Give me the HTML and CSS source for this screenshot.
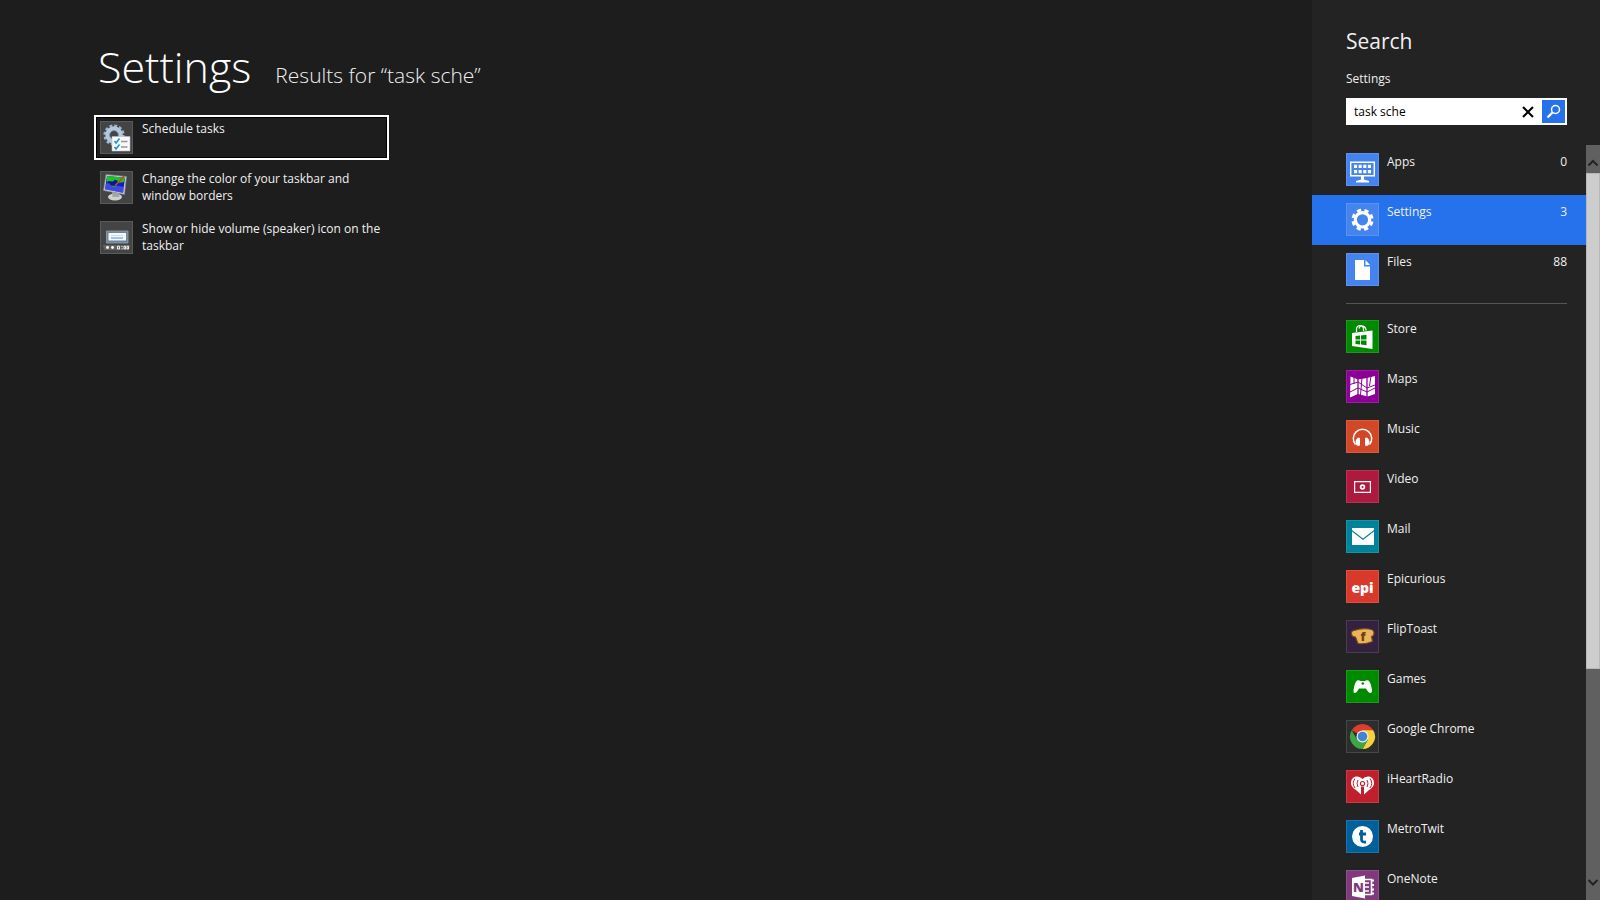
FILE: index.html
```html
<!DOCTYPE html>
<html lang="en">
<head>
    <meta charset="utf-8">
    <title>Search - Settings</title>
    <link rel="stylesheet" href="styles.css">
</head>
<body>
    <!-- RESULTS -->
    <main class="results">
        <header class="results-header">
            <h1>Settings</h1>
            <p>Results for “task sche”</p>
        </header>
        <ul class="tiles">
            <li><button type="button" class="tile focused">
                <svg class="icon gray" viewBox="0 0 33 33">
                    <circle cx="14" cy="14" r="9.3" fill="none" stroke="#9db4cc" stroke-width="2.6" stroke-dasharray="2.9 1.97"/>
                    <circle cx="14" cy="14" r="6.5" fill="none" stroke="#b4c8dc" stroke-width="4.4"/>
                    <circle cx="14" cy="14" r="4.4" fill="none" stroke="#7890a8"/>
                    <path d="M12 15.500h18v14.500h-18z" fill="#f8fafc" stroke="#b4bcc4" stroke-width=".6"/>
                    <path d="M14.500 20l1.500 2 3.500-4.500M14.500 26l1.500 2 3.500-4.500" fill="none" stroke="#1695c8" stroke-width="1.500"/>
                    <path d="M21 20.500h6.500M21 26h6.500" stroke="#9a90a8" stroke-width="1.300"/>
                </svg>
                <span>Schedule tasks</span>
            </button></li>
            <li><button type="button" class="tile">
                <svg class="icon gray" viewBox="0 0 33 33">
                    <ellipse cx="15" cy="26" rx="7" ry="3.500" fill="#d0d2d0"/>
                    <path d="M12 21l7 1 .5 4h-7z" fill="#a4a8a4"/>
                    <path d="M6 3.500L26.500 5.500 24.500 23.500 3.500 19.500z" fill="#c4c8c8" stroke="#83888a" stroke-width=".6"/>
                    <path d="M7 5L25 6.800 23 21.800 5 18.300z" fill="#1818c8"/>
                    <path d="M5 18.300L5.900 12.500 23.800 16 23 21.800z" fill="#5a6cf0" opacity=".6"/>
                    <path d="M7 5L25 6.800 24 11l-6 1-3 4-4-1 2-3-6 .5z" fill="#16c81e"/>
                    <path d="M8 10l5 .5 2-2 3 1.500-3 5-4-.5-1-2-3-.500z" fill="#0a1494"/>
                    <path d="M24 5l-5 6-4 3" fill="none" stroke="#e03428" stroke-width="1.300"/>
                </svg>
                <span>Change the color of your taskbar and window borders</span>
            </button></li>
            <li><button type="button" class="tile">
                <svg class="icon gray" viewBox="0 0 33 33">
                    <path d="M6.500 10h21.500v12h-21.500z" fill="#6f8496" stroke="#8fa4b4" stroke-width=".8"/>
                    <path d="M8.500 12h17.500v7.500h-17.500z" fill="#f4f8fc"/>
                    <path d="M11 17h12" stroke="#4a90d0"/>
                    <path d="M11 14.500h12" stroke="#cfdbe6"/>
                    <path d="M3 24h27l-1 5H4z" fill="#626262"/>
                    <circle cx="7.500" cy="26.500" r="1.400" fill="#fff"/>
                    <circle cx="12.500" cy="26.500" r="1.400" fill="#fff"/>
                    <path d="M17.500 25.200h2v2.800h-2zM24 25.200h1.500v2.800h-1.500zM27 25.200h1.500v2.800h-1.500z" fill="none" stroke="#fff" stroke-width=".9"/>
                    <path d="M22 25v1M22 27.300v1" stroke="#fff"/>
                </svg>
                <span>Show or hide volume (speaker) icon on the taskbar</span>
            </button></li>
        </ul>
    </main>

    <!-- SEARCH CHARM -->
    <aside class="charm">
        <form class="search">
            <h2>Search</h2>
            <label for="query">Settings</label>
            <div class="search-box">
                <input type="text" id="query" value="task sche">
                <button type="reset" class="clear" aria-label="Clear">
                    <svg viewBox="0 0 12 12"><path d="M1 1l10 10M11 1L1 11" fill="none" stroke="#000" stroke-width="2"/></svg>
                </button>
                <button type="submit" class="go" aria-label="Search">
                    <svg viewBox="0 0 23 23"><circle cx="13.500" cy="9.500" r="4" fill="none" stroke="#fff" stroke-width="1.500"/><path d="M10.500 12.500L5.500 17.500" stroke="#fff" stroke-width="2.300"/></svg>
                </button>
            </div>
        </form>

        <div class="scroller">
            <nav class="list">
                <ul>
                    <li><button type="button" class="entry">
                        <svg class="icon blue" viewBox="0 0 33 33">
                            <path d="M4.700 9.300h23.600v13.400h-23.600z" fill="none" stroke="#fff" stroke-width="1.400"/>
                            <path d="M8 13.400h17M8 18.600h17" fill="none" stroke="#fff" stroke-width="3.400" stroke-dasharray="3.100 1.530"/>
                            <path d="M15 23h3v3.500l5 1.500v1.500H10V28l5-1.500z" fill="#fff"/>
                        </svg>
                        <span>Apps</span><span class="count">0</span>
                    </button></li>
                    <li><button type="button" class="entry selected">
                        <svg class="icon blue" viewBox="0 0 33 33">
                            <circle cx="16.500" cy="16.800" r="7.200" fill="none" stroke="#fff" stroke-width="3.200"/>
                            <circle cx="16.500" cy="16.800" r="9.700" fill="none" stroke="#fff" stroke-width="2.800" stroke-dasharray="4.200 3.418" stroke-dashoffset="-1.700"/>
                        </svg>
                        <span>Settings</span><span class="count">3</span>
                    </button></li>
                    <li><button type="button" class="entry">
                        <svg class="icon blue" viewBox="0 0 33 33">
                            <path d="M9 7h9v6.500h6V27H9zM19.500 7L24 12h-4.500z" fill="#fff"/>
                        </svg>
                        <span>Files</span><span class="count">88</span>
                    </button></li>
                </ul>
                <hr>
                <ul>
                    <li><button type="button" class="entry">
                        <svg class="icon green" viewBox="0 0 33 33">
                            <path d="M6 13l20.500-2.500V29L6 26z" fill="#fff"/>
                            <path d="M10.500 12V8.500Q11 5.500 14 5.500T17.500 8.500V11M13 8.500Q14 5 17 6t3 4.500" fill="none" stroke="#fff" stroke-width="1.200"/>
                            <path d="M9.500 16l4.500-.5v4H9.500zM15 15.400l5.500-.6v4.700H15zM9.500 20.500H14v4l-4.500-.5zM15 20.500h5.500v4.800L15 24.600z" fill="#008a00"/>
                        </svg>
                        <span>Store</span>
                    </button></li>
                    <li><button type="button" class="entry">
                        <svg class="icon purple" viewBox="0 0 33 33">
                            <path d="M4.500 6.500l7.500 3 9-1.500 8-2V24l-7.500 2.500L12 24l-8 3.500z" fill="#fff"/>
                            <path d="M12 9v16M21 7v20" fill="none" stroke="#8c0095" stroke-width="1.300"/>
                            <path d="M4 14.500l8-2.500 9 6 8-3M4 22l8-4 9 4 8-4M8 7v7M16 8l-1.500 17M25 6l-1.500 10" fill="none" stroke="#8c0095"/>
                        </svg>
                        <span>Maps</span>
                    </button></li>
                    <li><button type="button" class="entry">
                        <svg class="icon orange" viewBox="0 0 33 33">
                            <path d="M9.500 24.500A9.200 9.200 0 1 1 23.500 24.500" fill="none" stroke="#fff" stroke-width="1.500"/>
                            <path d="M12 17.500l2 .5v7.500l-2 .5q-2.500-1-2.500-4T12 17.500zM21 17.500l-2 .5v7.500l2 .5q2.500-1 2.500-4T21 17.500z" fill="#fff"/>
                        </svg>
                        <span>Music</span>
                    </button></li>
                    <li><button type="button" class="entry">
                        <svg class="icon crimson" viewBox="0 0 33 33">
                            <path d="M8.600 11.600h15.800v10.800H8.600z" fill="none" stroke="#fff" stroke-width="1.200"/>
                            <circle cx="16.500" cy="17" r="1.900" fill="none" stroke="#fff" stroke-width="1.700"/>
                        </svg>
                        <span>Video</span>
                    </button></li>
                    <li><button type="button" class="entry">
                        <svg class="icon teal" viewBox="0 0 33 33">
                            <path d="M6 8h22v2L17 18.500 6 10zM6 11.500L17 20l11-8.500V25H6z" fill="#fff"/>
                        </svg>
                        <span>Mail</span>
                    </button></li>
                    <li><button type="button" class="entry">
                        <svg class="icon red" viewBox="0 0 33 33">
                            <text x="16.500" y="23" class="epi">epi</text>
                        </svg>
                        <span>Epicurious</span>
                    </button></li>
                    <li><button type="button" class="entry">
                        <svg class="icon plum" viewBox="0 0 33 33">
                            <path d="M8 10.500Q15 8 23 9q5 .5 5 4 0 3-2.500 3.500L26.500 21.500Q19 24.500 12 23.500L9.500 17Q6 17 5.500 14T8 10.500z" fill="#e8b45c" stroke="#7c4a18" stroke-width="1.200"/>
                            <text x="17" y="20.500" class="toast">f</text>
                        </svg>
                        <span>FlipToast</span>
                    </button></li>
                    <li><button type="button" class="entry">
                        <svg class="icon green" viewBox="0 0 33 33">
                            <path d="M11 10.500q2-.8 3.500.5h4.500q1.500-1.300 3.500-.500 2.500 2 3.500 10 0 2.500-1.700 2.500T20 18.500h-7Q10.500 23 8.800 23T7.500 20.500q1-8 3.500-10z" fill="#fff"/>
                            <circle cx="16.800" cy="13.500" r="1.300" fill="#008a00"/>
                        </svg>
                        <span>Games</span>
                    </button></li>
                    <li><button type="button" class="entry">
                        <svg class="icon dark" viewBox="0 0 33 33">
                            <path d="M16.500 16.500L5.700 10.200A12.500 12.500 0 0 1 27.300 10.200z" fill="#dc3d2e"/>
                            <path d="M16.500 16.500V10.200H27.300A12.500 12.500 0 0 1 16.500 29L22 19.600z" fill="#f8d03c"/>
                            <path d="M16.500 16.500L22 19.600 16.500 29A12.500 12.500 0 0 1 5.700 10.200L11 19.600z" fill="#3fa648"/>
                            <circle cx="16.500" cy="16.500" r="6" fill="#eef0f0"/>
                            <circle cx="16.500" cy="16.500" r="4.800" fill="#3f86d0"/>
                        </svg>
                        <span>Google Chrome</span>
                    </button></li>
                    <li><button type="button" class="entry">
                        <svg class="icon scarlet" viewBox="0 0 33 33">
                            <path d="M16.500 9Q19 6 23 6.500q5 1 5 6.500 0 4-5 7l-5 4.500v-8h-3v8L10 20q-5-3-5-7 0-5.500 5-6.500 4-.5 6.500 2.500z" fill="#fff"/>
                            <circle cx="16.500" cy="13.500" r="2.600" fill="#c0202c"/>
                            <circle cx="16.500" cy="13.500" r="1.500" fill="#fff"/>
                            <path d="M12 10q-2 3.500 0 7M9 8.500q-3.500 5 0 9.500M21 10q2 3.500 0 7M24 8.500q3.500 5 0 9.500" fill="none" stroke="#c0202c"/>
                        </svg>
                        <span>iHeartRadio</span>
                    </button></li>
                    <li><button type="button" class="entry">
                        <svg class="icon azure" viewBox="0 0 33 33">
                            <circle cx="16.500" cy="16.500" r="10.500" fill="#fff"/>
                            <path d="M15.500 10v9.500q0 3 4.500 2.500M13 14h7" fill="none" stroke="#00609c" stroke-width="2.800"/>
                        </svg>
                        <span>MetroTwit</span>
                    </button></li>
                    <li><button type="button" class="entry">
                        <svg class="icon violet" viewBox="0 0 33 33">
                            <path d="M6 8l13-2.500v23L6 26z" fill="#fff"/>
                            <path d="M19 9.500h6.500v15H19M19 13h4M19 17h4M19 21h4" fill="none" stroke="#fff" stroke-width="1.600"/>
                            <path d="M25 10.500h3M25 15h3M25 19.500h3M25 23.500h3" stroke="#fff" stroke-width="2.200"/>
                            <text x="12.500" y="21.500" class="note">N</text>
                        </svg>
                        <span>OneNote</span>
                    </button></li>
                </ul>
            </nav>
            <div class="scrollbar">
                <button type="button" aria-label="Scroll up"><svg viewBox="0 0 14 28"><path d="M2.500 20.500L7 16l4.500 4.500" fill="none" stroke="#222" stroke-width="2"/></svg></button>
                <div class="track"><div class="thumb"></div></div>
                <button type="button" aria-label="Scroll down"><svg viewBox="0 0 14 28"><path d="M2.500 8L7 12.500 11.500 8" fill="none" stroke="#222" stroke-width="2"/></svg></button>
            </div>
        </div>
    </aside>
</body>
</html>
```
FILE: styles.css
```css
* { box-sizing:border-box; }

body {
    display:flex;
    height:100vh;
    margin:0;
    overflow:hidden;
    font:12px/17px "Open Sans", "Noto Sans", sans-serif;
    color:#f0f0f0;
    background:#1d1d1d;
}
h1, h2, p, ul { margin:0; padding:0; }
ul { list-style-type:none; }
svg { display:block; }
button {
    margin:0;
    padding:0;
    border:0;
    font:inherit;
    color:inherit;
    text-align:left;
    background:none;
}

/*** results on the left ***/
.results {
    flex:1;
    padding:36px 94px 0;
}
.results-header {
    display:flex;
    align-items:baseline;
    gap:24px;
    padding-left:4px;
    font-weight:300;
}
.results-header h1 {
    font-size:43px;
    font-weight:300;
    line-height:62px;
    color:#fff;
}
.results-header p {
    font-size:21px;
    line-height:30px;
}
.tiles {
    display:grid;
    gap:5px;
    width:295px;
    margin-top:17px;
}
.tile {
    display:flex;
    gap:9px;
    width:100%;
    height:45px;
    padding:4px;
    border:2px solid transparent;
}
.tile span { margin-top:-1px; }
.tile.focused {
    border-color:#fff;
    box-shadow:inset 0 0 0 1px #000;
}

/*** square icons ***/
.icon {
    flex:none;
    width:33px;
    height:33px;
    box-shadow:inset 0 0 0 1px rgba(255,255,255,0.12);
}
.gray { background:#444; }
.blue { background:#4583ee; }
.green { background:#008a00; }
.purple { background:#8c0095; }
.orange { background:#d24726; }
.crimson { background:#ae193e; }
.teal { background:#008299; }
.red { background:#d8392b; }
.plum { background:#33213f; }
.dark { background:#2d2d2d; }
.scarlet { background:#c0202c; }
.azure { background:#00609c; }
.violet { background:#80397b; }

.icon text { text-anchor:middle; font-weight:800; }
.epi { font-size:14px; fill:#fff; }
.toast { font-size:12px; fill:#6e3f12; }
.note { font-size:13px; fill:#80397b; }

/*** search charm on the right ***/
.charm {
    display:flex;
    flex-direction:column;
    width:288px;
    background:#232323;
}
.search {
    padding:27px 33px 20px 34px;
}
.search h2 {
    font-size:21px;
    font-weight:400;
    line-height:29px;
}
.search label {
    display:block;
    margin:14px 0 11px;
}
.search-box {
    display:flex;
    align-items:center;
    height:27px;
    padding:2px;
    background:#fff;
}
.search-box input {
    flex:1;
    min-width:0;
    padding:0 6px;
    border:0;
    outline:0;
    font:inherit;
    color:#000;
    background:none;
}
.clear svg {
    width:12px;
    height:12px;
    margin-right:8px;
}
.go {
    background:#2672ec;
}
.go svg {
    width:23px;
    height:23px;
}

.scroller {
    display:flex;
    flex:1;
    min-height:0;
}
.list {
    flex:1;
    overflow:hidden;
}
.entry {
    display:flex;
    gap:8px;
    width:100%;
    height:50px;
    padding:8px 19px 8px 34px;
}
.entry.selected { background:#2672ec; }
.count { margin-left:auto; }
.list hr {
    height:1px;
    margin:8px 19px 8px 34px;
    border:0;
    background:#555;
}

.scrollbar {
    display:flex;
    flex-direction:column;
    width:14px;
    background:#606060;
}
.scrollbar svg {
    width:14px;
    height:28px;
}
.track { flex:1; }
.thumb {
    height:71%;
    border:1px solid #b8b8b8;
    background:#cdcdcd;
}
```
